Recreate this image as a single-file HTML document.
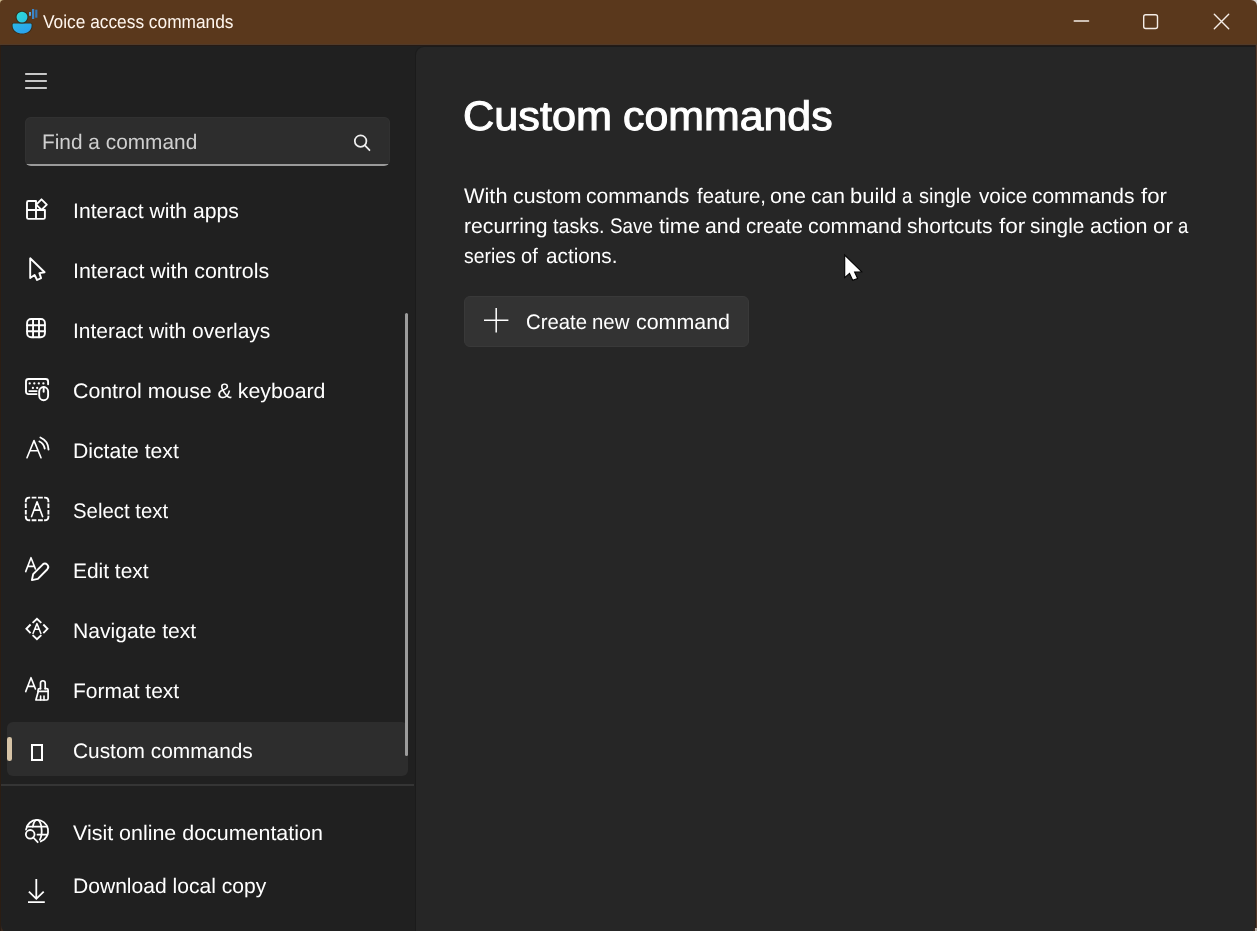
<!DOCTYPE html>
<html>
<head>
<meta charset="utf-8">
<title>Voice access commands</title>
<style>
html,body{margin:0;padding:0;}
html{width:1257px;height:931px;overflow:hidden;background:#202020;}
body{width:1257px;height:931px;overflow:hidden;position:relative;background:#5a381c;font-family:"Liberation Sans",sans-serif;color:#fff;}
.abs{position:absolute;}
.corner{position:absolute;width:12px;height:12px;}
#win{position:absolute;left:0;top:0;width:1257px;height:945px;background:#5a381c;border-radius:4px 6px 0 0;}
#below{position:absolute;left:0;top:60px;width:1257px;height:871px;background:#3b2a20;}
#titlebar{position:absolute;left:0;top:0;width:1257px;height:45px;}
#sidebar{position:absolute;left:1px;top:46px;width:1254px;height:887px;background:#202020;border-radius:0 0 8px 8px;}
#lb{position:absolute;left:0;top:45px;width:1px;height:900px;background:#2b1d13;}
#rb1{position:absolute;left:1255px;top:45px;width:1px;height:900px;background:#2d221c;}
#rb2{position:absolute;left:1256px;top:45px;width:1px;height:900px;background:#533b2c;}
#topline{position:absolute;left:0;top:44px;width:1257px;height:1px;background:#503a29;}
#topline2{position:absolute;left:0;top:45px;width:1256px;height:1px;background:#261a14;}
#main{position:absolute;left:415px;top:46px;width:840px;height:887px;border-bottom-right-radius:8px;background:#262626;border-top-left-radius:9px;border-left:1px solid #1b1b1b;border-top:1px solid #1b1b1b;box-sizing:border-box;}
.t{position:absolute;white-space:nowrap;transform-origin:0 50%;line-height:1;transform:scale(0.5);text-rendering:geometricPrecision;}
.nav{font-size:42px;color:#fff;left:73.5px;}
svg{position:absolute;overflow:visible;}
.ic{fill:none;stroke:#fff;stroke-width:1.9;stroke-linecap:round;stroke-linejoin:round;}
</style>
</head>
<body>
<div id="root" style="position:absolute;left:0;top:0;width:1257px;height:931px;overflow:hidden;">
<div class="corner" style="left:0;top:0;background:#cdb98f"></div>
<div class="corner" style="right:0;top:0;background:#d6d2cf"></div>
<div id="win"></div><div id="below"></div>
<div id="titlebar"></div>
<div id="topline"></div><div id="topline2"></div><div id="lb"></div><div id="rb1"></div><div id="rb2"></div>
<div id="sidebar"></div>
<div id="main"></div>
<div class="corner" style="right:0;bottom:0;width:2px;height:3px;background:#b5aca6"></div>

<!-- TITLE BAR -->
<svg id="appicon" style="left:0;top:0" width="60" height="46" viewBox="0 0 60 46">
  <defs>
    <linearGradient id="g1" x1="0" y1="0" x2="1" y2="1"><stop offset="0" stop-color="#2fd9d2"/><stop offset="1" stop-color="#28bfe6"/></linearGradient>
    <linearGradient id="g2" x1="0" y1="0" x2="1" y2="1"><stop offset="0" stop-color="#2bb8e6"/><stop offset="1" stop-color="#2a9df0"/></linearGradient>
  </defs>
  <path d="M13.8,23.6 H30.4 Q31.6,23.6 31.6,24.8 V25.6 C31.6,31 26.8,33.6 22.1,33.6 C17.4,33.6 12.6,31 12.6,25.6 V24.8 Q12.6,23.6 13.8,23.6Z" fill="url(#g2)" stroke="#2c2a1c" stroke-opacity="0.8" stroke-width="1.8" paint-order="stroke"/>
  <circle cx="22" cy="17.1" r="5.45" fill="url(#g1)" stroke="#2c2a1c" stroke-opacity="0.8" stroke-width="2" paint-order="stroke"/>
  <rect x="29" y="12" width="2" height="3.8" fill="#5aa2dc"/>
  <rect x="32" y="9" width="2.2" height="10" fill="#3d86c8"/>
  <rect x="35.2" y="9.7" width="2.2" height="8" fill="#3577b6"/>
</svg>

<svg style="left:1060px;top:0" width="197" height="46" viewBox="1060 0 197 46">
  <path class="ic" style="stroke-width:1.4;stroke:#f5ede6" d="M1074.2,21 H1088.6"/>
  <rect class="ic" style="stroke-width:1.4;stroke:#f5ede6" x="1143.7" y="14.7" width="13.8" height="13.8" rx="2"/>
  <path class="ic" style="stroke-width:1.4;stroke:#f5ede6" d="M1214.3,14.3 L1228.7,28.7 M1228.7,14.3 L1214.3,28.7"/>
</svg>

<!-- SIDEBAR -->
<svg style="left:0;top:60px" width="60" height="40" viewBox="0 60 60 40">
  <path class="ic" style="stroke-width:1.5" d="M25.7,74 H46.3 M25.7,81 H46.3 M25.7,88 H46.3"/>
</svg>

<div class="abs" id="search" style="left:25px;top:117px;width:365px;height:49px;background:#2d2d2d;border-radius:6px;overflow:hidden;box-shadow:inset 0 0 0 1px #313131;">
  <div class="abs" style="left:0;bottom:0;width:365px;height:2px;background:#9a9a9a;"></div>
</div>
<svg style="left:336px;top:118px" width="60" height="50" viewBox="0 0 60 50">
  <circle class="ic" style="stroke-width:1.75;stroke:#efefef" cx="24.6" cy="23.1" r="5.8"/>
  <path class="ic" style="stroke-width:1.75;stroke:#efefef" d="M28.9,27.4 L33.5,32.2"/>
</svg>

<!-- nav items text -->

<!-- selected -->
<div class="abs" style="left:7px;top:722px;width:401px;height:54px;background:#2d2d2d;border-radius:6px;"></div>
<div class="abs" style="left:7.3px;top:737px;width:4.6px;height:24px;background:#d6c3a6;border-radius:2.3px;"></div>
<div class="abs" style="left:31px;top:744px;width:12px;height:17px;border:2px solid #fff;box-sizing:border-box;"></div>

<!-- scrollbar -->
<div class="abs" style="left:405.1px;top:313px;width:3px;height:442.5px;background:#9c9c9c;border-radius:1.5px;"></div>

<!-- divider -->
<div class="abs" style="left:1px;top:784px;width:413px;height:1.5px;background:#353535;"></div>


<!-- ICONS -->
<!-- apps -->
<svg style="left:16px;top:190px" width="50" height="50" viewBox="0 0 50 50">
  <path class="ic" d="M20,11 H12.5 Q11,11 11,12.5 V27.4 Q11,28.9 12.5,28.9 H27.4 Q28.9,28.9 28.9,27.4 V20 H11 M20,11 V28.9"/>
  <path class="ic" d="M25.5,9.3 L30.8,14.6 L25.5,19.9 L20.2,14.6 Z"/>
</svg>
<!-- cursor -->
<svg style="left:16px;top:250px" width="50" height="50" viewBox="0 0 50 50">
  <path class="ic" d="M14.2,8.3 V28 L18.6,25 L21.1,30 L25.1,28.1 L23.4,23.1 L28.6,22.2 Z"/>
</svg>
<!-- grid -->
<svg style="left:16px;top:310px" width="50" height="50" viewBox="0 0 50 50">
  <rect class="ic" x="11.1" y="9" width="17.8" height="18.3" rx="4"/>
  <path class="ic" d="M17.05,9 V27.3 M23,9 V27.3 M11.1,15.2 H28.9 M11.1,21.3 H28.9"/>
</svg>
<!-- keyboard mouse -->
<svg style="left:16px;top:370px" width="50" height="50" viewBox="0 0 50 50">
  <path class="ic" d="M32.1,14.3 V11.5 Q32.1,9 29.6,9 H12.5 Q10,9 10,11.5 V21.6 Q10,24.1 12.5,24.1 H20.6"/>
  <path class="ic" d="M13.3,21.1 H20.6"/>
  <g fill="#fff"><circle cx="13.7" cy="13.4" r="1.15"/><circle cx="18.3" cy="13.4" r="1.15"/><circle cx="22.8" cy="13.4" r="1.15"/><circle cx="27.4" cy="13.4" r="1.15"/><circle cx="16.9" cy="17.9" r="1.15"/><circle cx="21.2" cy="17.9" r="1.15"/></g>
  <rect class="ic" x="23.2" y="17" width="8.9" height="13.2" rx="4.45"/>
  <path class="ic" d="M27.65,17 V21.8"/>
</svg>
<!-- dictate -->
<svg style="left:16px;top:430px" width="50" height="50" viewBox="0 0 50 50">
  <path class="ic" style="stroke-width:1.6" d="M11,27.7 L18,10.6 L25,27.7 M13.9,20.7 H22.1"/>
  <path class="ic" d="M23.4,11.5 A9.7,9.7 0 0 1 28.7,18.5 M24.4,7.5 A13.55,13.55 0 0 1 32.5,19.6"/>
</svg>
<!-- select -->
<svg style="left:16px;top:490px" width="50" height="50" viewBox="0 0 50 50">
  <path class="ic" style="stroke-width:1.6" d="M15.6,26.6 L21.05,11.7 L26.6,26.6 M17.9,20.1 H24.2"/>
  <g class="ic" style="stroke-width:1.9;stroke-linecap:butt">
    <path d="M9.8,12.2 V11.1 Q9.8,7.6 13.3,7.6 H14.2"/>
    <path d="M28.1,7.6 H28.9 Q32.4,7.6 32.4,11.1 V12.2"/>
    <path d="M32.4,25.7 V26.7 Q32.4,30.2 28.9,30.2 H28.1"/>
    <path d="M14.2,30.2 H13.3 Q9.8,30.2 9.8,26.7 V25.7"/>
    <path d="M15.7,7.6 H20.4 M22,7.6 H26.8 M15.7,30.2 H20.4 M22,30.2 H26.8"/>
    <path d="M9.8,13.5 V18 M9.8,19.9 V24.5 M32.4,13.5 V18 M32.4,19.9 V24.5"/>
  </g>
</svg>
<!-- edit -->
<svg style="left:16px;top:550px" width="50" height="50" viewBox="0 0 50 50">
  <path class="ic" style="stroke-width:1.6" d="M9.7,21.6 L15,7.7 L19.4,18.9 M11.8,16.4 H18.3"/>
  <path class="ic" d="M15.9,30.1 L17.17,24.17 L26.67,14.57 A3.3,3.3 0 0 1 31.33,19.23 L21.83,28.83 Z"/>
</svg>
<!-- navigate -->
<svg style="left:16px;top:610px" width="50" height="50" viewBox="0 0 50 50">
  <path class="ic" style="stroke-linecap:butt;stroke-linejoin:miter" d="M16.6,12.9 L20.95,8.9 L25.3,12.9 M14.6,14.5 L10.4,18.8 L14.6,23.1 M27.3,14.5 L31.5,18.8 L27.3,23.1 M16.6,25.1 L20.95,29.3 L25.3,25.1"/>
  <path class="ic" style="stroke-width:1.5" d="M17,23.5 L20.95,13.6 L24.9,23.5 M18.7,19.3 H23.2"/>
</svg>
<!-- format -->
<svg style="left:16px;top:670px" width="50" height="50" viewBox="0 0 50 50">
  <path class="ic" style="stroke-width:1.6" d="M9.7,21.6 L15,7.7 L19.4,18.9 M11.8,16.4 H18.3"/>
  <path class="ic" style="stroke-width:1.7" d="M24.5,18.6 V13.1 a2.35,2.35 0 0 1 4.7,0 V18.6"/>
  <path class="ic" style="stroke-width:1.7" d="M24.5,18.7 H23.5 Q22.1,18.7 22.1,20.1 V22 L19.9,30 H30.7 Q32.1,30 32.1,28.6 V20.1 Q32.1,18.7 30.7,18.7 H29.2"/>
  <path class="ic" style="stroke-width:1.6" d="M22.1,21.4 H32.1 M24.6,26 V30 M28,26 V30"/>
</svg>
<!-- globe -->
<svg style="left:16px;top:806px" width="50" height="50" viewBox="0 0 50 50">
  <path class="ic" style="stroke-width:1.8" d="M10.05,23.5 A11.1,11.1 0 1 1 24.8,35.45"/>
  <path class="ic" style="stroke-width:1.8" d="M21.05,13.9 A4.6,11.1 0 0 0 16.8,20.7 M21.05,13.9 A4.6,11.1 0 0 1 23.9,33.7"/>
  <path class="ic" style="stroke-width:1.8" d="M10.8,20.7 H31.3 M21.5,28.7 H31.5"/>
  <circle class="ic" style="stroke-width:1.8" cx="14.2" cy="28.35" r="4.35"/>
  <path class="ic" style="stroke-width:1.8" d="M17.3,31.5 L21.7,36.2"/>
</svg>
<!-- download -->
<svg style="left:16px;top:871px" width="50" height="50" viewBox="16 871 50 50">
  <path class="ic" style="stroke-linecap:butt;stroke-linejoin:miter;stroke-width:1.8" d="M36.3,879 V898.5 M28.9,891.6 L36.3,898.8 L43.7,891.6 M28,902.2 H44.8"/>
</svg>

<!-- MAIN -->

<div class="abs" style="left:464px;top:296px;width:285px;height:51px;background:#333;border-radius:6px;box-sizing:border-box;border:1px solid #393939;"></div>
<svg style="left:474px;top:298px" width="44" height="44" viewBox="474 298 44 44">
  <path class="ic" style="stroke-width:1.5;stroke-linecap:butt" d="M484,320.3 H508.4 M496.2,308 V332.5"/>
</svg>

<div id="textlayer" style="position:absolute;left:0;top:0;width:1257px;height:931px;will-change:transform;">
<!--TEXT-->
<div class="t" id="ttl" style="left:42.62px;top:3.34px;font-size:37px;color:#fff6ee;transform:scale(0.4679,0.5);">Voice access commands</div>
<div class="t" id="find" style="left:42.06px;top:120.97px;font-size:42px;color:#cfcfcf;transform:scale(0.4964,0.5);">Find a command</div>
<div class="t" id="n1" style="left:72.58px;top:189.97px;font-size:42px;color:#fff;transform:scale(0.5041,0.5);">Interact with apps</div>
<div class="t" id="n2" style="left:72.92px;top:249.97px;font-size:42px;color:#fff;transform:scale(0.5092,0.5);">Interact with controls</div>
<div class="t" id="n3" style="left:72.58px;top:309.97px;font-size:42px;color:#fff;transform:scale(0.5002,0.5);">Interact with overlays</div>
<div class="t" id="n4" style="left:72.64px;top:369.97px;font-size:42px;color:#fff;transform:scale(0.5077,0.5);">Control mouse &amp; keyboard</div>
<div class="t" id="n5" style="left:72.52px;top:429.97px;font-size:42px;color:#fff;transform:scale(0.5037,0.5);">Dictate text</div>
<div class="t" id="n6" style="left:73.17px;top:489.97px;font-size:42px;color:#fff;transform:scale(0.4847,0.5);">Select text</div>
<div class="t" id="n7" style="left:72.66px;top:549.97px;font-size:42px;color:#fff;transform:scale(0.4981,0.5);">Edit text</div>
<div class="t" id="n8" style="left:72.60px;top:609.97px;font-size:42px;color:#fff;transform:scale(0.5026,0.5);">Navigate text</div>
<div class="t" id="n9" style="left:72.66px;top:669.97px;font-size:42px;color:#fff;transform:scale(0.4997,0.5);">Format text</div>
<div class="t" id="n10" style="left:72.66px;top:729.97px;font-size:42px;color:#fff;transform:scale(0.4970,0.5);">Custom commands</div>
<div class="t" id="n11" style="left:73.18px;top:811.97px;font-size:42px;color:#fff;transform:scale(0.5103,0.5);">Visit online documentation</div>
<div class="t" id="n12" style="left:72.70px;top:864.97px;font-size:42px;color:#fff;transform:scale(0.5016,0.5);">Download local copy</div>
<div class="t" id="h1a" style="left:463.04px;top:75.04px;font-size:82px;color:#fff;-webkit-text-stroke:2.1px #fff;transform:scale(0.5277,0.5);">Custom</div>
<div class="t" id="h1b" style="left:622.93px;top:75.04px;font-size:82px;color:#fff;-webkit-text-stroke:2.1px #fff;transform:scale(0.5227,0.5);">commands</div>
<div class="t" id="b1" style="left:526.25px;top:300.97px;font-size:42px;color:#fff;transform:scale(0.4837,0.5);">Create</div>
<div class="t" id="b2" style="left:592.32px;top:300.97px;font-size:42px;color:#fff;transform:scale(0.4866,0.5);">new</div>
<div class="t" id="b3" style="left:635.73px;top:300.97px;font-size:42px;color:#fff;transform:scale(0.5097,0.5);">command</div>
<div class="t" id="w0_0" style="left:464.39px;top:174.97px;font-size:42px;color:#fff;transform:scale(0.5180,0.5);">With</div>
<div class="t" id="w0_1" style="left:513.04px;top:174.97px;font-size:42px;color:#fff;transform:scale(0.5064,0.5);">custom</div>
<div class="t" id="w0_2" style="left:585.96px;top:174.97px;font-size:42px;color:#fff;transform:scale(0.5025,0.5);">commands</div>
<div class="t" id="w0_3" style="left:697.19px;top:174.97px;font-size:42px;color:#fff;transform:scale(0.4843,0.5);">feature,</div>
<div class="t" id="w0_4" style="left:769.86px;top:174.97px;font-size:42px;color:#fff;transform:scale(0.5127,0.5);">one</div>
<div class="t" id="w0_5" style="left:810.80px;top:174.97px;font-size:42px;color:#fff;transform:scale(0.5000,0.5);">can</div>
<div class="t" id="w0_6" style="left:849.92px;top:174.97px;font-size:42px;color:#fff;transform:scale(0.5243,0.5);">build</div>
<div class="t" id="w0_7" style="left:901.86px;top:174.97px;font-size:42px;color:#fff;transform:scale(0.4416,0.5);">a</div>
<div class="t" id="w0_8" style="left:918.87px;top:174.97px;font-size:42px;color:#fff;transform:scale(0.4783,0.5);">single</div>
<div class="t" id="w0_9" style="left:978.82px;top:174.97px;font-size:42px;color:#fff;transform:scale(0.4937,0.5);">voice</div>
<div class="t" id="w0_10" style="left:1032.08px;top:174.97px;font-size:42px;color:#fff;transform:scale(0.4983,0.5);">commands</div>
<div class="t" id="w0_11" style="left:1140.63px;top:174.97px;font-size:42px;color:#fff;transform:scale(0.5279,0.5);">for</div>
<div class="t" id="w1_0" style="left:463.69px;top:204.97px;font-size:42px;color:#fff;transform:scale(0.5035,0.5);">recurring</div>
<div class="t" id="w1_1" style="left:552.91px;top:204.97px;font-size:42px;color:#fff;transform:scale(0.4695,0.5);">tasks.</div>
<div class="t" id="w1_2" style="left:610.05px;top:204.97px;font-size:42px;color:#fff;transform:scale(0.4484,0.5);">Save</div>
<div class="t" id="w1_3" style="left:658.89px;top:204.97px;font-size:42px;color:#fff;transform:scale(0.5175,0.5);">time</div>
<div class="t" id="w1_4" style="left:705.17px;top:204.97px;font-size:42px;color:#fff;transform:scale(0.5066,0.5);">and</div>
<div class="t" id="w1_5" style="left:745.79px;top:204.97px;font-size:42px;color:#fff;transform:scale(0.4878,0.5);">create</div>
<div class="t" id="w1_6" style="left:808.00px;top:204.97px;font-size:42px;color:#fff;transform:scale(0.5091,0.5);">command</div>
<div class="t" id="w1_7" style="left:906.87px;top:204.97px;font-size:42px;color:#fff;transform:scale(0.5014,0.5);">shortcuts</div>
<div class="t" id="w1_8" style="left:998.67px;top:204.97px;font-size:42px;color:#fff;transform:scale(0.5371,0.5);">for</div>
<div class="t" id="w1_9" style="left:1030.38px;top:204.97px;font-size:42px;color:#fff;transform:scale(0.4951,0.5);">single</div>
<div class="t" id="w1_10" style="left:1089.76px;top:204.97px;font-size:42px;color:#fff;transform:scale(0.5126,0.5);">action</div>
<div class="t" id="w1_11" style="left:1152.50px;top:204.97px;font-size:42px;color:#fff;transform:scale(0.5331,0.5);">or</div>
<div class="t" id="w1_12" style="left:1177.59px;top:204.97px;font-size:42px;color:#fff;transform:scale(0.4395,0.5);">a</div>
<div class="t" id="w2_0" style="left:463.55px;top:234.97px;font-size:42px;color:#fff;transform:scale(0.4613,0.5);">series</div>
<div class="t" id="w2_1" style="left:520.96px;top:234.97px;font-size:42px;color:#fff;transform:scale(0.4785,0.5);">of</div>
<div class="t" id="w2_2" style="left:546.37px;top:234.97px;font-size:42px;color:#fff;transform:scale(0.4934,0.5);">actions.</div>
<!--/TEXT-->
</div>

<!-- mouse cursor -->
<svg style="left:825px;top:240px" width="50" height="50" viewBox="0 0 50 50">
  <path d="M19.7,15 V37.6 L24.5,33.4 L27.7,40.3 L32.6,38.5 L29.6,32 L36.6,31.7 Z" fill="#fff" stroke="#000" stroke-width="1.1" stroke-linejoin="miter"/>
</svg>
</div>
</body>
</html>
